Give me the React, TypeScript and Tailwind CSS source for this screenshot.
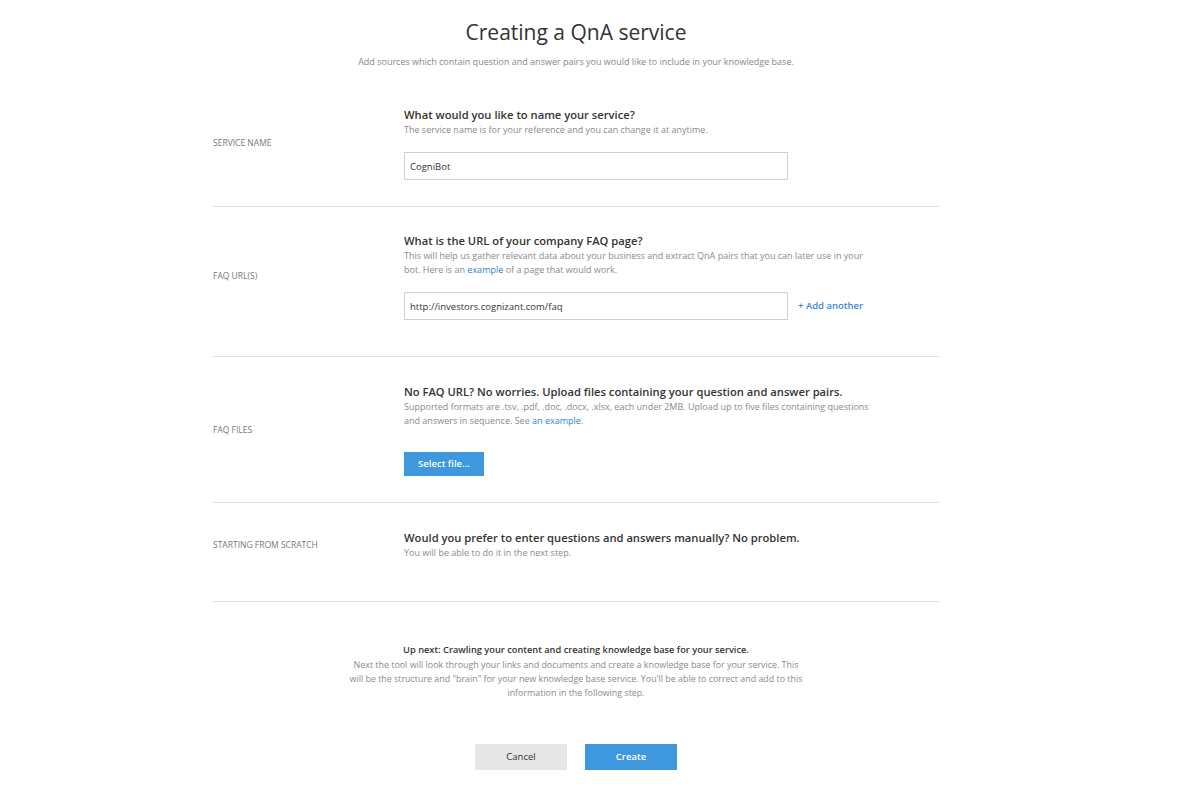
import React from 'react';

const font = { fontFamily: '"Open Sans", "Liberation Sans", sans-serif' };

const Section: React.FC<{ label: string; pad: string; children: React.ReactNode }> = ({ label, pad, children }) => (
  <div className={`flex items-center border-b border-[#e3e3e3] ${pad}`}>
    <div className="w-[192px] shrink-0 pl-[1px] text-[8.5px] uppercase text-[#777]">{label}</div>
    <div className="w-[470px]">{children}</div>
  </div>
);

const Heading: React.FC<{ children: React.ReactNode }> = ({ children }) => (
  <h2 className="whitespace-nowrap text-[11.2px] font-semibold leading-[16px] text-[#333]">{children}</h2>
);

const Desc: React.FC<{ children: React.ReactNode }> = ({ children }) => (
  <p className="text-[9px] leading-[14px] text-[#8a8a8a]">{children}</p>
);

export default function App() {
  return (
    <div className="min-h-screen bg-white" style={font}>
      <div className="ml-[212px] w-[728px] pt-[16px]">
        <h1 className="text-center text-[21px] leading-[32px] text-[#333]">Creating a QnA service</h1>
        <p className="mt-[7px] text-center text-[9px] leading-[14px] text-[#888]">
          Add sources which contain question and answer pairs you would like to include in your knowledge base.
        </p>

        <div className="mt-[12px]">
          <Section label="Service name" pad="pt-[26px] pb-[26px]">
            <Heading>What would you like to name your service?</Heading>
            <Desc>The service name is for your reference and you can change it at anytime.</Desc>
            <input
              readOnly
              value="CogniBot"
              className="mt-[15px] h-[28px] w-[384px] border border-[#cfcfcf] px-[5px] text-[9.5px] text-[#333] outline-none"
              style={font}
            />
          </Section>

          <Section label="FAQ URL(S)" pad="pt-[26px] pb-[36px]">
            <Heading>What is the URL of your company FAQ page?</Heading>
            <Desc>
              This will help us gather relevant data about your business and extract QnA pairs that you can later use in your bot. Here is an{' '}
              <a className="text-[#2f7fd3]">example</a> of a page that would work.
            </Desc>
            <div className="mt-[15px] flex items-center">
              <input
                readOnly
                value="http://investors.cognizant.com/faq"
                className="h-[28px] w-[384px] border border-[#cfcfcf] px-[5px] text-[9.5px] text-[#333] outline-none"
                style={font}
              />
              <a className="ml-[10px] text-[9.5px] font-semibold text-[#3a86d6]">+ Add another</a>
            </div>
          </Section>

          <Section label="FAQ files" pad="pt-[27px] pb-[26px]">
            <Heading>No FAQ URL? No worries. Upload files containing your question and answer pairs.</Heading>
            <Desc>
              Supported formats are .tsv, .pdf, .doc, .docx, .xlsx, each under 2MB. Upload up to five files containing questions and answers in sequence. See{' '}
              <a className="text-[#2f7fd3]">an example</a>.
            </Desc>
            <button className="mt-[24px] h-[24px] w-[80px] bg-[#3d98dd] text-[9.5px] font-semibold text-white">Select file...</button>
          </Section>

          <Section label="Starting from scratch" pad="pt-[27px] pb-[41px]">
            <Heading>Would you prefer to enter questions and answers manually? No problem.</Heading>
            <Desc>You will be able to do it in the next step.</Desc>
          </Section>
        </div>

        <div className="mx-auto mt-[40px] w-[462px] text-center">
          <p className="text-[9.25px] font-semibold leading-[16px] text-[#333]">
            Up next: Crawling your content and creating knowledge base for your service.
          </p>
          <p className="mx-auto w-[456px] text-[8.9px] leading-[14px] text-[#8a8a8a]">
            Next the tool will look through your links and documents and create a knowledge base for your service. This will be the structure and "brain" for your new knowledge base service. You'll be able to correct and add to this information in the following step.
          </p>
        </div>

        <div className="mt-[44px] flex justify-center gap-[18px]">
          <button className="h-[26px] w-[92px] bg-[#e6e6e6] text-[9.5px] font-medium text-[#333]">Cancel</button>
          <button className="h-[26px] w-[92px] bg-[#3d98dd] text-[9.5px] font-semibold text-white">Create</button>
        </div>
      </div>
    </div>
  );
}
